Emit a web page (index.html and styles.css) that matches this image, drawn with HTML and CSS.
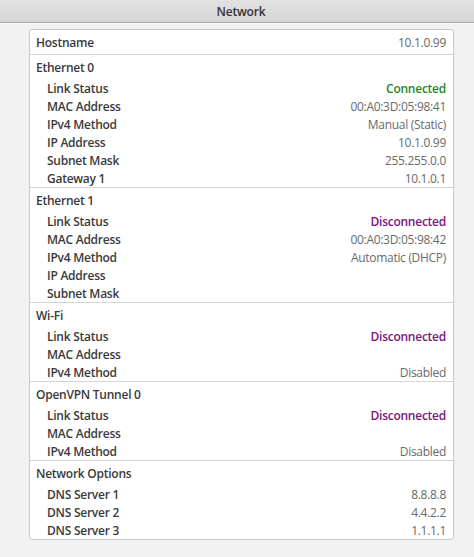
FILE: index.html
```html
<!DOCTYPE html>
<html>
<head>
<meta charset="utf-8">
<link rel="stylesheet" href="styles.css">
</head>
<body>
<div class="titlebar"><span class="title">Network</span></div>
<div class="panel">
  <div class="section">
    <div class="row head"><span class="label">Hostname</span><span class="value">10.1.0.99</span></div>
  </div>
  <div class="section">
    <div class="row head"><span class="label">Ethernet 0</span></div>
    <div class="rows">
      <div class="row"><span class="label">Link Status</span><span class="value ok">Connected</span></div>
      <div class="row"><span class="label">MAC Address</span><span class="value">00:A0:3D:05:98:41</span></div>
      <div class="row"><span class="label">IPv4 Method</span><span class="value">Manual (Static)</span></div>
      <div class="row"><span class="label">IP Address</span><span class="value">10.1.0.99</span></div>
      <div class="row"><span class="label">Subnet Mask</span><span class="value">255.255.0.0</span></div>
      <div class="row"><span class="label">Gateway 1</span><span class="value">10.1.0.1</span></div>
    </div>
  </div>
  <div class="section">
    <div class="row head"><span class="label">Ethernet 1</span></div>
    <div class="rows">
      <div class="row"><span class="label">Link Status</span><span class="value bad">Disconnected</span></div>
      <div class="row"><span class="label">MAC Address</span><span class="value">00:A0:3D:05:98:42</span></div>
      <div class="row"><span class="label">IPv4 Method</span><span class="value">Automatic (DHCP)</span></div>
      <div class="row"><span class="label">IP Address</span><span class="value"></span></div>
      <div class="row"><span class="label">Subnet Mask</span><span class="value"></span></div>
    </div>
  </div>
  <div class="section">
    <div class="row head"><span class="label">Wi-Fi</span></div>
    <div class="rows">
      <div class="row"><span class="label">Link Status</span><span class="value bad">Disconnected</span></div>
      <div class="row"><span class="label">MAC Address</span><span class="value"></span></div>
      <div class="row"><span class="label">IPv4 Method</span><span class="value">Disabled</span></div>
    </div>
  </div>
  <div class="section">
    <div class="row head"><span class="label">OpenVPN Tunnel 0</span></div>
    <div class="rows">
      <div class="row"><span class="label">Link Status</span><span class="value bad">Disconnected</span></div>
      <div class="row"><span class="label">MAC Address</span><span class="value"></span></div>
      <div class="row"><span class="label">IPv4 Method</span><span class="value">Disabled</span></div>
    </div>
  </div>
  <div class="section last">
    <div class="row head"><span class="label">Network Options</span></div>
    <div class="rows">
      <div class="row"><span class="label">DNS Server 1</span><span class="value">8.8.8.8</span></div>
      <div class="row"><span class="label">DNS Server 2</span><span class="value">4.4.2.2</span></div>
      <div class="row"><span class="label">DNS Server 3</span><span class="value">1.1.1.1</span></div>
    </div>
  </div>
</div>
</body>
</html>
```
FILE: styles.css
```css
html, body {
  margin: 0;
  padding: 0;
}
body {
  background: #f2f2f2;
  font-family: "Open Sans", "DejaVu Sans", sans-serif;
  font-size: 12px;
  color: #3a3a3a;
  width: 474px;
  height: 557px;
  overflow: hidden;
}
.titlebar {
  height: 22px;
  background: linear-gradient(#e2e2e2, #d6d6d6);
  border-bottom: 1px solid #a9a9a9;
  box-shadow: 0 1px 0 #fafafa;
  display: flex;
  align-items: center;
  justify-content: center;
  padding-left: 8px;
}
.title {
  font-weight: 600;
  font-size: 12px;
  letter-spacing: -0.2px;
  color: #333;
}
.panel {
  margin: 6px 0 0 29px;
  width: 425px;
  box-sizing: border-box;
  background: #fff;
  border: 1px solid #c9c9c9;
  border-radius: 3px;
}
.section {
  padding: 3px 7px 0 6px;
  border-bottom: 1px solid #d4d4d4;
}
.section:first-child {
  padding-bottom: 3px;
}
.section.last {
  border-bottom: none;
}
.rows {
  margin-top: 3px;
  padding-left: 11px;
}
.row {
  height: 18px;
  display: flex;
  align-items: center;
  justify-content: space-between;
}
.label {
  font-weight: 600;
  letter-spacing: -0.25px;
  color: #3a3a3a;
}
.value {
  color: #6a6a6a;
  letter-spacing: -0.3px;
}
.value.ok {
  color: #1f8a1f;
  font-weight: 600;
  letter-spacing: -0.25px;
}
.value.bad {
  color: #7d1480;
  font-weight: 600;
  letter-spacing: -0.25px;
}
```
